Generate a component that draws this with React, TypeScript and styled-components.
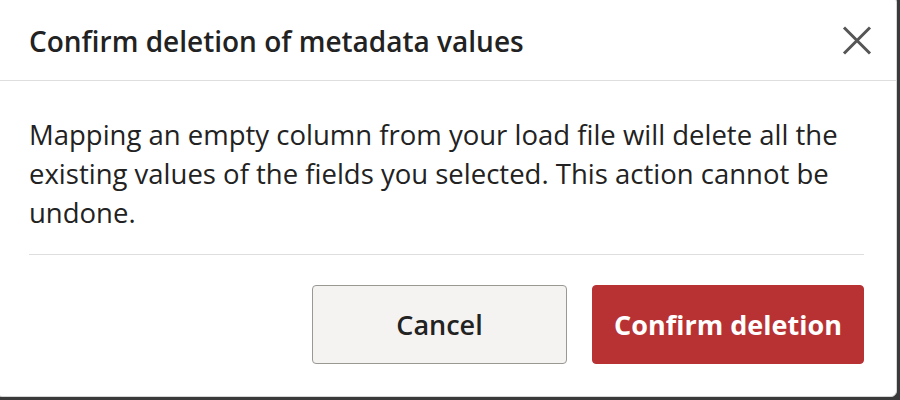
import React from "react";
import styled, { createGlobalStyle } from "styled-components";

const Global = createGlobalStyle`
  html, body {
    margin: 0;
    padding: 0;
    background: #3a3a3a;
    overflow: hidden;
  }
  body {
    font-family: "Open Sans", "Liberation Sans", sans-serif;
  }
`;

const Modal = styled.div`
  box-sizing: border-box;
  width: 901px;
  height: 401px;
  margin: -4px 0 0 -4px;
  background: #fff;
  border: 1px solid #d6d6d6;
  border-radius: 6px;
  display: flex;
  flex-direction: column;
  overflow: hidden;
`;

const Header = styled.div`
  box-sizing: border-box;
  height: 84px;
  padding: 4px 24px 0 32px;
  display: flex;
  align-items: center;
  justify-content: space-between;
  border-bottom: 1px solid #dedede;
`;

const Title = styled.h2`
  margin: 0;
  font-size: 28px;
  font-weight: 600;
  color: #222;
  letter-spacing: 0;
`;

const CloseButton = styled.button`
  border: 0;
  background: transparent;
  padding: 0;
  width: 30px;
  height: 30px;
  display: flex;
  align-items: center;
  justify-content: center;
  cursor: pointer;
`;

const Body = styled.div`
  padding: 34px 32px 0 32px;
  display: flex;
  flex-direction: column;
`;

const Message = styled.p`
  margin: 0;
  font-size: 27.5px;
  line-height: 39px;
  color: #222;
  padding-bottom: 22px;
  border-bottom: 1px solid #dedede;
`;

const Footer = styled.div`
  display: flex;
  justify-content: flex-end;
  gap: 25px;
  padding: 30px 32px 0 32px;
`;

const Button = styled.button<{ $primary?: boolean }>`
  box-sizing: border-box;
  height: 79px;
  width: ${(p) => (p.$primary ? "272px" : "255px")};
  border-radius: 4px;
  font-family: "Open Sans", "Liberation Sans", sans-serif;
  font-size: 27px;
  font-weight: ${(p) => (p.$primary ? 700 : 600)};
  cursor: pointer;
  border: 1px solid ${(p) => (p.$primary ? "#b83234" : "#9a9893")};
  background: ${(p) => (p.$primary ? "#b83234" : "#f4f3f1")};
  color: ${(p) => (p.$primary ? "#fff" : "#222")};
`;

export default function App() {
  return (
    <>
      <Global />
      <Modal>
        <Header>
          <Title>Confirm deletion of metadata values</Title>
          <CloseButton aria-label="Close">
            <svg width="30" height="30" viewBox="0 0 30 30">
              <path d="M2 1.5 L28 27.5 M28 1.5 L2 27.5" stroke="#555" strokeWidth="3" strokeLinecap="butt" />
            </svg>
          </CloseButton>
        </Header>
        <Body>
          <Message>
            Mapping an empty column from your load file will delete all the existing values of the
            fields you selected. This action cannot be undone.
          </Message>
        </Body>
        <Footer>
          <Button>Cancel</Button>
          <Button $primary>Confirm deletion</Button>
        </Footer>
      </Modal>
    </>
  );
}
